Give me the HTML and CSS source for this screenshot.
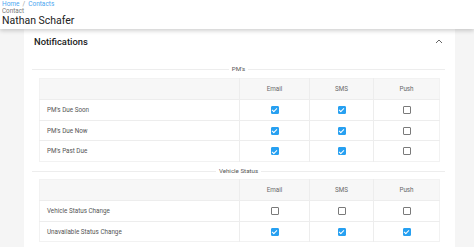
FILE: index.html
```html
<!DOCTYPE html>
<html lang="en">

<head>
  <meta charset="UTF-8">
  <meta name="viewport" content="width=device-width, initial-scale=1.0">
  <title>Nathan Schafer - Contact</title>
  <link rel="stylesheet" href="styles.css">
</head>

<body>

  <header class="page-header">
    <nav class="crumbs">
      <a href="#">Home</a>
      <span class="crumb-sep">/</span>
      <a href="#">Contacts</a>
    </nav>
    <div class="page-kind">Contact</div>
    <h1 class="page-title">Nathan Schafer</h1>
  </header>

  <section class="card">
    <div class="card-head">
      <h2>Notifications</h2>
      <svg class="chevron" width="8" height="5" viewBox="0 0 8 5">
        <path d="M1 4 L4 1 L7 4" fill="none" stroke="#666" stroke-width="1" />
      </svg>
    </div>

    <div class="group">
      <div class="legend">PM's</div>
      <table class="notify">
        <thead>
          <tr>
            <th class="label"></th>
            <th class="email">Email</th>
            <th class="sms">SMS</th>
            <th class="push">Push</th>
          </tr>
        </thead>
        <tbody>
          <tr>
            <td class="label">PM's Due Soon</td>
            <td><span class="box on"></span></td>
            <td><span class="box on"></span></td>
            <td><span class="box"></span></td>
          </tr>
          <tr>
            <td class="label">PM's Due Now</td>
            <td><span class="box on"></span></td>
            <td><span class="box on"></span></td>
            <td><span class="box"></span></td>
          </tr>
          <tr>
            <td class="label">PM's Past Due</td>
            <td><span class="box on"></span></td>
            <td><span class="box on"></span></td>
            <td><span class="box"></span></td>
          </tr>
        </tbody>
      </table>
    </div>

    <div class="group second">
      <div class="legend">Vehicle Status</div>
      <table class="notify">
        <thead>
          <tr>
            <th class="label"></th>
            <th class="email">Email</th>
            <th class="sms">SMS</th>
            <th class="push">Push</th>
          </tr>
        </thead>
        <tbody>
          <tr>
            <td class="label">Vehicle Status Change</td>
            <td><span class="box"></span></td>
            <td><span class="box"></span></td>
            <td><span class="box"></span></td>
          </tr>
          <tr>
            <td class="label">Unavailable Status Change</td>
            <td><span class="box on"></span></td>
            <td><span class="box on"></span></td>
            <td><span class="box on"></span></td>
          </tr>
        </tbody>
      </table>
    </div>
  </section>

</body>

</html>
```

FILE: styles.css
```css
* {
  margin: 0;
  padding: 0;
  box-sizing: border-box;
  font-family: Roboto, "Noto Sans", sans-serif;

  --line: hsl(0, 0%, 93%);
  --blue: hsl(204, 88%, 55%);
}

body {
  background-color: hsl(0, 0%, 96%);
  height: 100vh;
  overflow: hidden;
}

.page-header {
  position: relative;
  z-index: 2;
  background-color: white;
  height: 29px;
  padding: 1px 2px 0;
  box-shadow: 0 2px 4px rgba(0, 0, 0, 0.18);
}

.crumbs {
  font-size: 6.5px;
  line-height: 7px;
  display: flex;
  gap: 3px;
}

.crumbs a {
  color: hsl(207, 85%, 62%);
  text-decoration: none;
}

.crumb-sep {
  color: #999;
}

.page-kind {
  font-size: 6.3px;
  line-height: 7px;
  color: #777;
}

.page-title {
  font-size: 10.5px;
  line-height: 12px;
  font-weight: 400;
  color: #222;
}

.card {
  background-color: white;
  margin: 0 19px 0 24px;
  height: 230px;
}

.card-head {
  display: flex;
  align-items: center;
  justify-content: space-between;
  height: 25px;
  padding: 0 12px 0 10px;
}

.card-head h2 {
  font-size: 9.4px;
  font-weight: 500;
  color: #222;
}

.group {
  margin: 12px 10px 0 8px;
}

.group.second {
  margin-top: 6px;
}

.legend {
  display: flex;
  align-items: center;
  gap: 3px;
  font-size: 6.2px;
  line-height: 7px;
  color: #555;
}

.legend::before,
.legend::after {
  content: "";
  flex: 1;
  border-top: 1px solid var(--line);
}

.notify {
  margin: 5px 6px 0 7px;
  width: 400px;
  border-collapse: collapse;
  table-layout: fixed;
  border: 1px solid hsl(0, 0%, 95%);
}

.group.second .notify {
  margin-top: 4px;
}

.notify th {
  background-color: hsl(0, 0%, 97%);
  height: 21px;
  font-size: 6.3px;
  font-weight: 400;
  color: #6a6a6a;
}

.notify td {
  height: 20.7px;
  text-align: center;
  border-top: 1px solid var(--line);
  font-size: 6.3px;
  color: #555;
}

.notify th + th,
.notify td + td {
  border-left: 1px solid var(--line);
}

.notify .label {
  width: 200px;
  text-align: left;
  padding-left: 7px;
}

.notify .email {
  width: 70px;
}

.notify .sms {
  width: 64px;
}

.notify .push {
  width: 66px;
}

.box {
  display: inline-block;
  vertical-align: middle;
  width: 8px;
  height: 8px;
  border: 1px solid #7a7a7a;
  border-radius: 1px;
  position: relative;
}

.box.on {
  background-color: var(--blue);
  border-color: var(--blue);
}

.box.on::after {
  content: "";
  position: absolute;
  left: 1.6px;
  top: 0.4px;
  width: 2px;
  height: 4px;
  border: solid white;
  border-width: 0 1px 1px 0;
  transform: rotate(45deg);
}
```
